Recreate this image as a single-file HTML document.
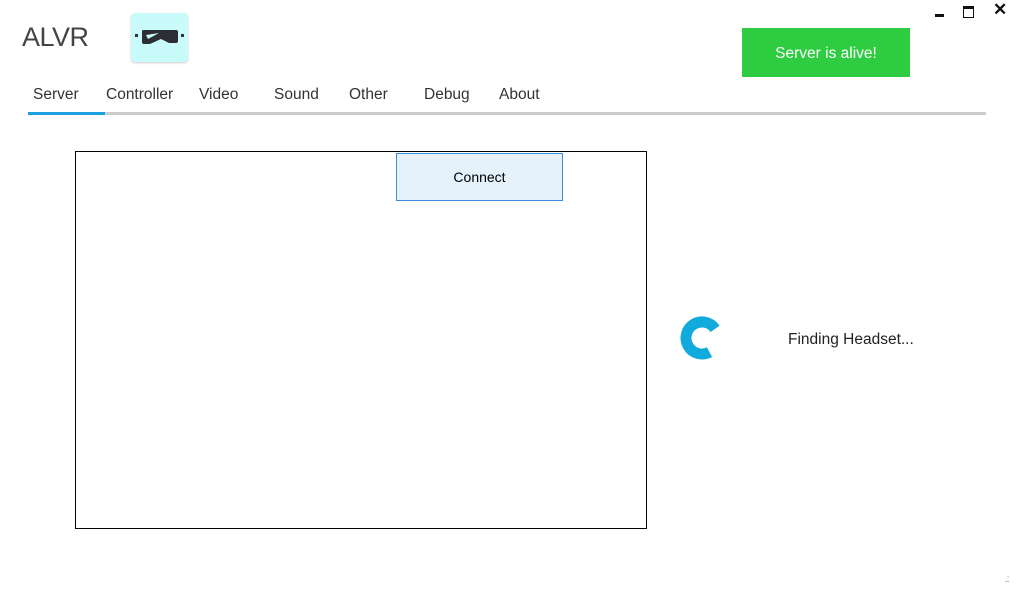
<!DOCTYPE html>
<html><head><style>
body{margin:0;width:1023px;height:590px;background:#fff;position:relative;overflow:hidden;font-family:"Segoe UI","Liberation Sans",sans-serif;color:#222}
.a{position:absolute}
.tab{position:absolute;top:86px;font-size:15.5px;color:#333}
</style></head><body>
<div class="a" style="left:22px;top:22px;font-size:27px;font-weight:300;color:#444;letter-spacing:-0.5px">ALVR</div>
<div class="a" style="left:131px;top:13px;width:57px;height:49px;background:#c9fbfb;border-radius:4px;box-shadow:0 1px 2px #ccc"></div>
<svg class="a" style="left:131px;top:13px" width="57" height="49"><rect x="4" y="21" width="3" height="3" fill="#333"/><rect x="50" y="21" width="3" height="3" fill="#333"/><path d="M11 18 Q11 17 13 17 H45 Q47 17 47 19 V28 Q47 30 45 30 H38 L30 26 L19 31 H13 Q11 31 11 29 Z" fill="#2b2f33"/><path d="M15 22 L28 20 L17 26 Z" fill="#c9fbfb"/></svg>
<div class="tab" style="left:33px">Server</div>
<div class="tab" style="left:106px">Controller</div>
<div class="tab" style="left:199px">Video</div>
<div class="tab" style="left:274px">Sound</div>
<div class="tab" style="left:349px">Other</div>
<div class="tab" style="left:424px">Debug</div>
<div class="tab" style="left:499px">About</div>
<div class="a" style="left:28px;top:112px;width:958px;height:3px;background:#ccc"></div>
<div class="a" style="left:28px;top:112px;width:77px;height:3px;background:#1ba1e2"></div>
<div class="a" style="left:742px;top:28px;width:168px;height:49px;background:#2ecc40;color:#fff;font-size:15.5px;text-align:center;line-height:51px">Server is alive!</div>
<div class="a" style="left:935px;top:14px;width:9px;height:3px;background:#111"></div>
<div class="a" style="left:963px;top:6px;width:9px;height:8px;border:1px solid #111;border-top-width:3px"></div>
<div class="a" style="left:993px;top:0px;font-size:17px;font-weight:bold;color:#111">✕</div>
<div class="a" style="left:75px;top:151px;width:570px;height:376px;border:1px solid #000"></div>
<div class="a" style="left:396px;top:153px;width:165px;height:46px;border:1px solid #3c8fdc;background:#e5f1fb;font-size:14px;text-align:center;line-height:46px;color:#000">Connect</div>
<svg class="a" style="left:678px;top:314px" width="50" height="50"><path d="M37.1 14.8 A16 16 0 1 0 31.5 38.1" fill="none" stroke="#11aadc" stroke-width="11"/></svg>
<div class="a" style="left:788px;top:331px;font-size:15.5px;color:#222">Finding Headset...</div>
<div class="a" style="left:1005px;top:574px;font-size:10px;color:#888;letter-spacing:-1px">.:</div>
</body></html>
